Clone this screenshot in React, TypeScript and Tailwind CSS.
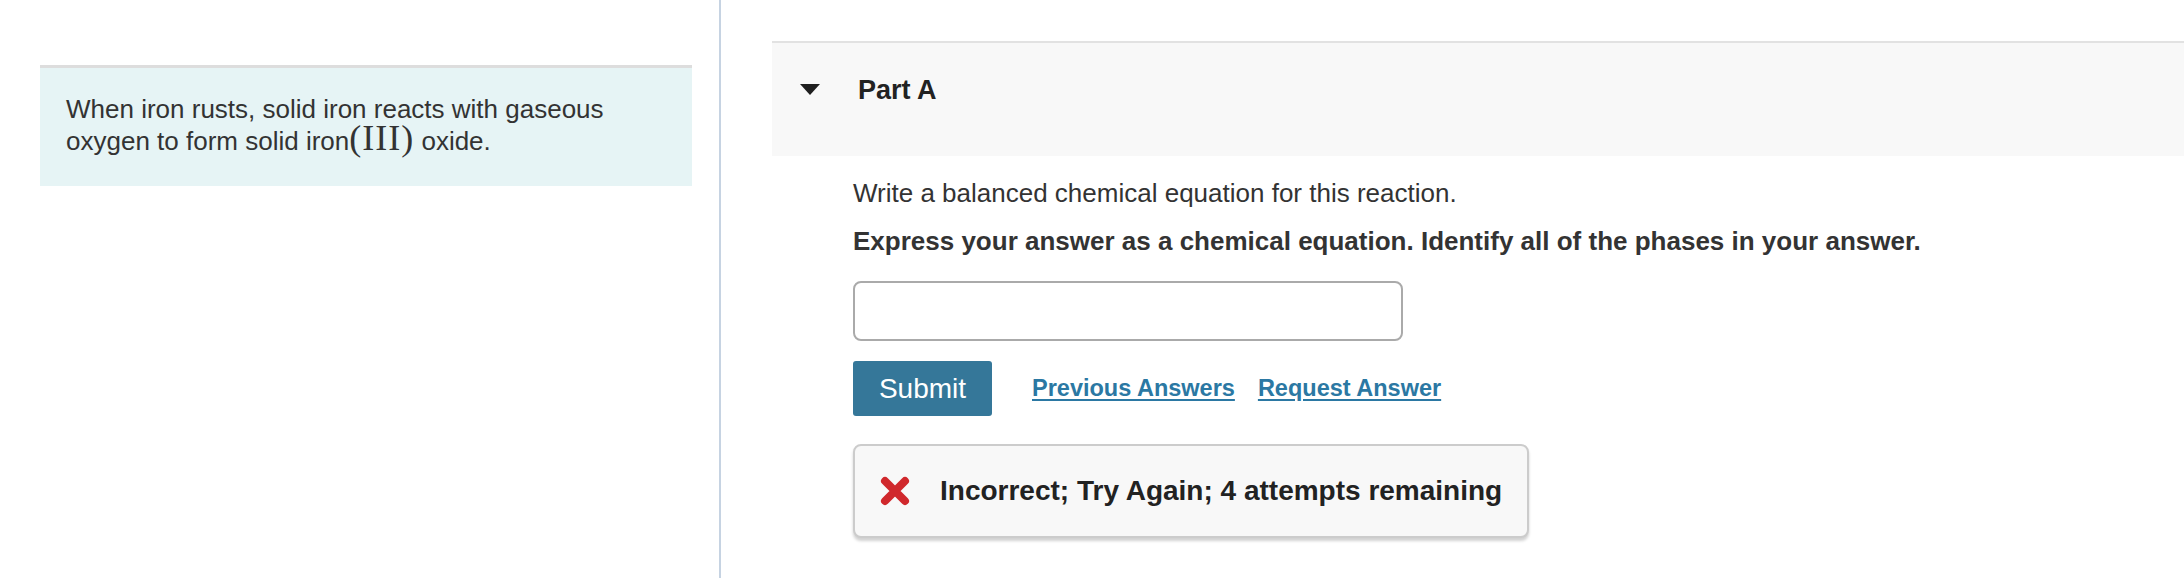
import React from "react";

function Caret() {
  return (
    <svg width="20" height="11" viewBox="0 0 20 11" aria-hidden="true">
      <polygon points="0,0 20,0 10,11" fill="#1f1f1f" />
    </svg>
  );
}

function RedCross() {
  return (
    <svg width="30" height="30" viewBox="0 0 30 30" aria-hidden="true">
      <path d="M5 5 L25 25 M25 5 L5 25" stroke="#d0282c" strokeWidth="8" strokeLinecap="round" />
    </svg>
  );
}

export default function App() {
  return (
    <div className="flex h-[578px] w-[2184px] bg-white font-['Liberation_Sans',Arial,sans-serif] text-[#333]">
      {/* intro column */}
      <div className="w-[719px] shrink-0 pl-[40px] pt-[65px]">
        <div className="w-[652px] border-t-[3px] border-[#dddddd] bg-[#e6f4f5] px-[26px] pb-[29px] pt-[25px] text-[26px] leading-[32px]">
          When iron rusts, solid iron reacts with gaseous
          <br />
          oxygen to form solid iron
          <span className="font-['Liberation_Serif',serif] text-[36px] leading-[0] tracking-[1px]">(III)</span> oxide.
        </div>
      </div>

      <div className="w-[2px] shrink-0 bg-[#c6d3e2]" />

      {/* part A */}
      <div className="flex-1 pl-[51px] pt-[41px]">
        <div className="flex h-[115px] items-start border-t-2 border-[#e2e2e2] bg-[#f8f8f8] pl-[28px] pt-[31px]">
          <div className="mt-[10px]">
            <Caret />
          </div>
          <h2 className="ml-[38px] text-[27px] font-bold leading-[32px] text-[#222]">Part A</h2>
        </div>

        <div className="pl-[81px] pt-[21px]">
          <p className="text-[26px] leading-[32px]">Write a balanced chemical equation for this reaction.</p>
          <p className="mt-[16px] text-[26px] font-bold leading-[32px]">
            Express your answer as a chemical equation. Identify all of the phases in your answer.
          </p>

          <input
            type="text"
            aria-label="Answer"
            className="mt-[24px] block h-[60px] w-[550px] rounded-[8px] border-2 border-[#aaaaaa] bg-white px-3 text-[24px] outline-none"
          />

          <div className="mt-[20px] flex items-center">
            <button
              type="button"
              className="h-[55px] w-[139px] rounded-[3px] bg-[#357799] text-[28px] text-white"
            >
              Submit
            </button>
            <a href="#" className="ml-[40px] text-[23.5px] font-bold text-[#2b78a3] underline underline-offset-[3px]">
              Previous Answers
            </a>
            <a href="#" className="ml-[23px] text-[23.5px] font-bold text-[#2b78a3] underline underline-offset-[3px]">
              Request Answer
            </a>
          </div>

          <div className="mt-[28px] flex h-[94px] w-[676px] items-center rounded-[8px] border-2 border-[#cccccc] bg-[#f8f8f8] pl-[25px] shadow-[0_3px_3px_rgba(0,0,0,0.18)]">
            <RedCross />
            <span className="ml-[30px] text-[28px] font-bold text-[#222]">
              Incorrect; Try Again; 4 attempts remaining
            </span>
          </div>
        </div>
      </div>
    </div>
  );
}
